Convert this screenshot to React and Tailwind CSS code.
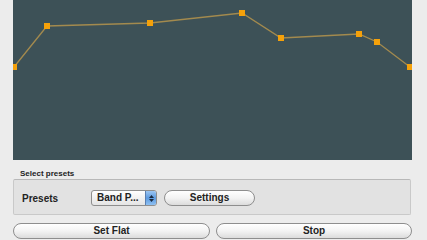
import React from 'react';

const points = [
  [1, 67], [34, 26], [137, 23], [229, 13], [268, 38], [346, 34], [364, 42], [397, 67],
];

function Curve() {
  const line = points.map(p => p.join(',')).join(' ');
  return (
    <svg width="399" height="160" className="block">
      <polyline points={line} fill="none" stroke="#a38a4e" strokeWidth="1.3" />
      {points.map(([x, y], i) => (
        <rect key={i} x={x - 3} y={y - 3} width="6" height="6" fill="#f5a10a" />
      ))}
    </svg>
  );
}

function PillButton({ children, className }) {
  return (
    <button
      className={`h-[16px] rounded-full border border-[#8e8e8e] bg-gradient-to-b from-[#ffffff] via-[#f3f3f3] to-[#dcdcdc] text-[10px] font-bold text-[#222] leading-none whitespace-nowrap ${className}`}
    >
      {children}
    </button>
  );
}

export default function App() {
  return (
    <div className="w-[427px] h-[240px] bg-[#ececec] overflow-hidden" style={{ fontFamily: '"Liberation Sans", "DejaVu Sans", sans-serif' }}>
      <div className="ml-[13px] w-[399px] h-[160px] bg-[#3d5157]">
        <Curve />
      </div>
      <div className="ml-[20px] mt-[9px] h-[10px] text-[8px] font-bold text-[#222] leading-[10px]">Select presets</div>
      <div className="ml-[13px] w-[398px] h-[36px] bg-[#e2e2e2] border border-[#c9c9c9] border-t-[#b8b8b8] rounded-[2px] flex items-center pt-[2px]">
        <span className="ml-[8px] w-[68px] text-[10px] font-bold text-[#222]">Presets</span>
        <div className="ml-[1px] w-[66px] h-[16px] rounded-[3px] border border-[#8e8e8e] bg-gradient-to-b from-[#ffffff] to-[#e4e4e4] flex items-center overflow-hidden">
          <span className="flex-1 pl-[5px] text-[10px] font-bold text-[#222] leading-none whitespace-nowrap">Band P...</span>
          <div className="w-[11px] h-full bg-gradient-to-b from-[#9cc6f2] via-[#5d9be0] to-[#8ec0f2] border-l border-[#5a7fb0] flex flex-col items-center justify-center gap-[1px]">
            <svg width="5" height="3"><path d="M0 3 L2.5 0 L5 3 Z" fill="#1a2a40" /></svg>
            <svg width="5" height="3"><path d="M0 0 L2.5 3 L5 0 Z" fill="#1a2a40" /></svg>
          </div>
        </div>
        <PillButton className="ml-[7px] w-[91px]">Settings</PillButton>
      </div>
      <div className="ml-[13px] mt-[8px] w-[399px] flex gap-[6px]">
        <PillButton className="w-[197px]">Set Flat</PillButton>
        <PillButton className="w-[196px]">Stop</PillButton>
      </div>
    </div>
  );
}
